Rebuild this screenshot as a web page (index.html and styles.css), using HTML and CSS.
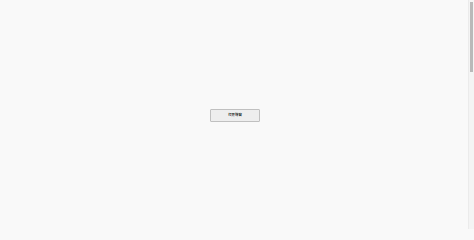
FILE: index.html
```html
<!DOCTYPE html>
<html lang="zh">
<head>
<meta charset="utf-8">
<title>Demo</title>
<link rel="stylesheet" href="styles.css">
</head>
<body>
<div class="page">
  <main class="stage">
    <button class="open-btn" type="button">打开弹窗</button>
  </main>
  <div class="scrollbar"><div class="thumb"></div></div>
</div>
</body>
</html>
```

FILE: styles.css
```css
html, body {
  margin: 0;
  height: 229px;
  overflow: hidden;
  background: #f9f9f9;
  font-family: "Noto Sans CJK SC", "Noto Sans", sans-serif;
}
.page {
  display: flex;
  height: 229px;
}
.stage {
  flex: 1;
  display: flex;
  align-items: center;
  justify-content: center;
  padding: 1px 0 0 2px;
}
.scrollbar {
  width: 6px;
  background: #f4f4f4;
  border-left: 1px solid #ebebeb;
  box-sizing: border-box;
  padding: 2px 1px 0 1px;
}
.thumb {
  height: 70px;
  background: #b9b9b9;
}
.open-btn {
  width: 50px;
  height: 13px;
  padding: 0;
  border: 1px solid #c0c0c0;
  border-radius: 1px;
  background: #eeeeee;
  color: #222;
  font-family: "Noto Sans CJK SC", "Noto Sans", sans-serif;
  font-size: 3.4px;
  font-weight: 700;
  line-height: 1;
}
```
